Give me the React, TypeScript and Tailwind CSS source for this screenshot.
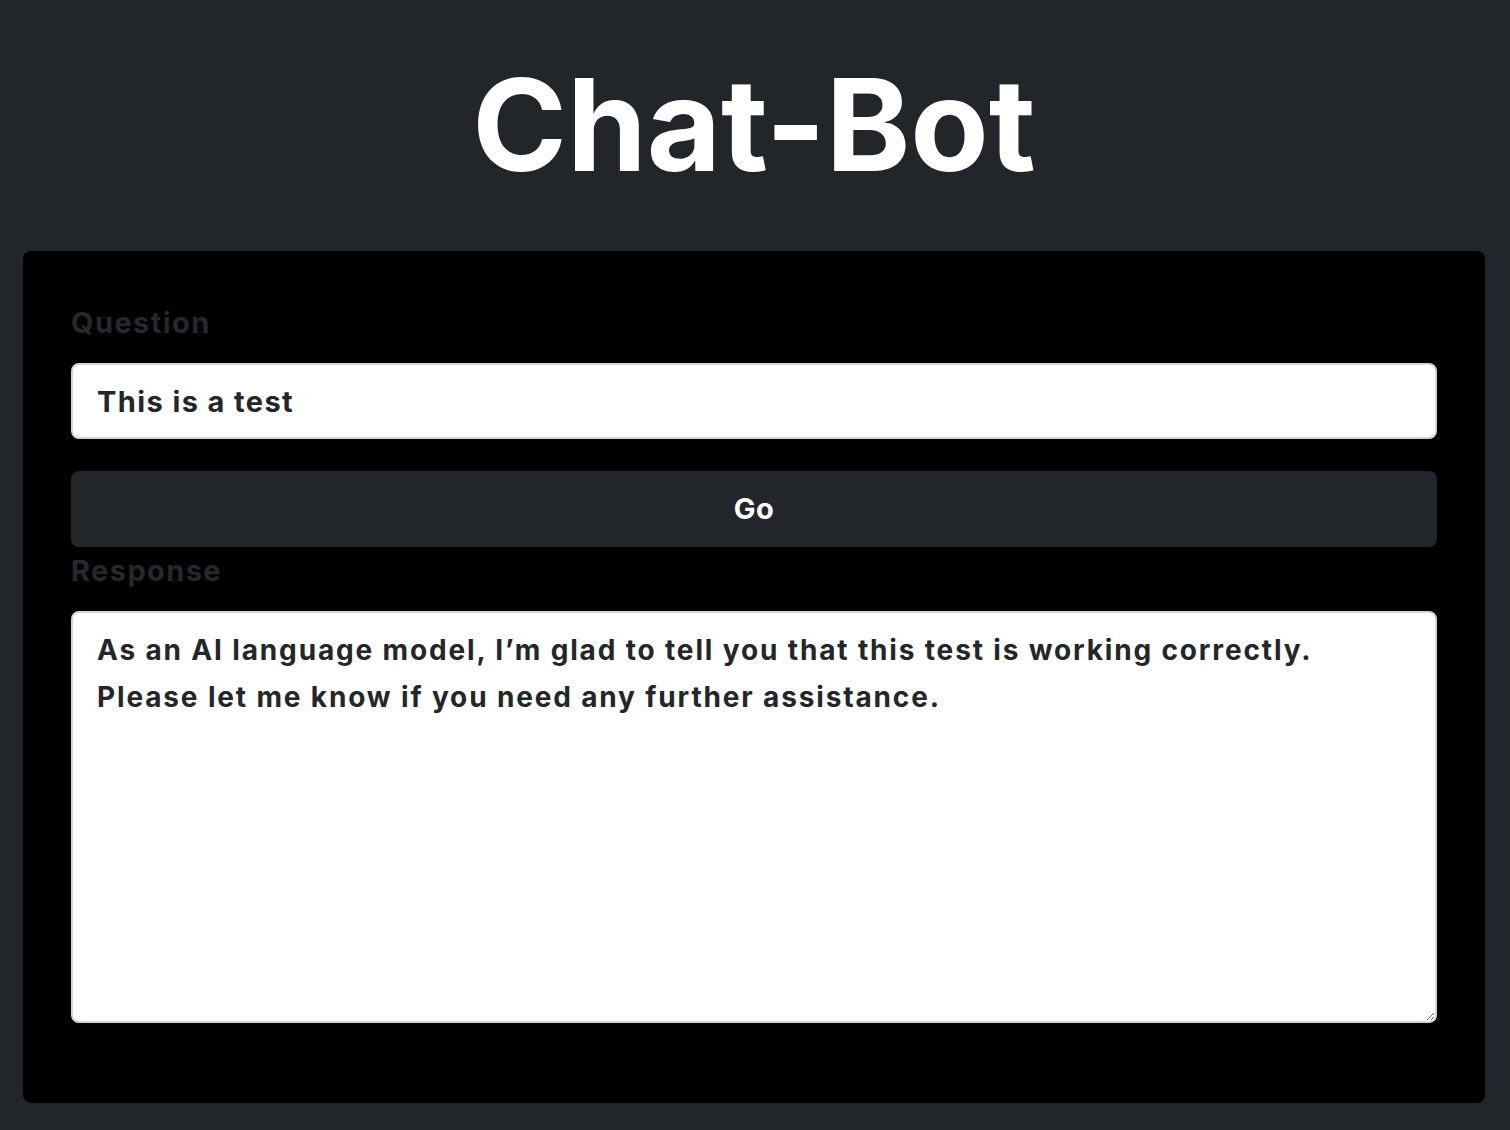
import React from "react";

export default function App() {
  const font = { fontFamily: "Inter, 'Noto Sans', sans-serif" };
  return (
    <div className="min-h-[1130px] w-full bg-[#22252a] pl-[23px] pr-[25px] pb-[27px]" style={font}>
      <h1 className="flex h-[251px] items-center justify-center pb-[2px] text-[128px] font-bold leading-none tracking-[0px] text-white">
        Chat-Bot
      </h1>
      <div className="flex flex-col rounded-[8px] bg-black px-[48px] pb-[80px] pt-[52px]">
        <label className="mb-[20px] text-[29px] font-bold leading-[40px] tracking-[1.4px] text-[#25282d]">
          Question
        </label>
        <input
          readOnly
          value="This is a test"
          className="h-[76px] w-full rounded-[8px] border-2 border-[#d1d5db] bg-white px-[24px] text-[29px] font-bold tracking-[1.4px] text-[#23262b] outline-none"
        />
        <button className="mt-[32px] h-[76px] w-full rounded-[8px] bg-[#23262b] text-[29px] font-bold tracking-[0.5px] text-white">
          Go
        </button>
        <label className="mb-[16px] text-[29px] font-bold leading-[48px] tracking-[1.4px] text-[#25282d]">
          Response
        </label>
        <textarea
          readOnly
          value={
            "As an AI language model, I\u2019m glad to tell you that this test is working correctly. Please let me know if you need any further assistance."
          }
          className="h-[412px] w-full rounded-[8px] border-2 border-[#d1d5db] bg-white px-[24px] py-[14px] text-[28px] font-bold leading-[47px] tracking-[1.85px] text-[#23262b] outline-none"
        />
      </div>
    </div>
  );
}
